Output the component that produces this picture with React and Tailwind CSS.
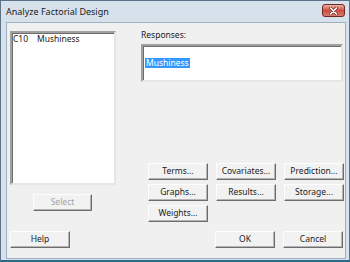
import React from "react";

const btn =
  "flex items-center justify-center bg-[#f2f2f2] border border-t-[#fdfdfd] border-l-[#fdfdfd] border-r-[#6d6d6d] border-b-[#6d6d6d] shadow-[inset_-1px_-1px_0_#b4b4b4] text-[8.5px] leading-none text-[#1a1a1a]";

function Btn({ children, className = "", disabled = false }) {
  return (
    <div className={`${btn} ${className} ${disabled ? "!text-[#a3a3a3]" : ""}`}>
      {children}
    </div>
  );
}

export default function App() {
  return (
    <div
      className="relative w-[350px] h-[262px] overflow-hidden bg-[#d6e1ec] border border-[#5d7286] border-b-[2px] border-b-[#2a6a88] flex flex-col"
      style={{ fontFamily: '"Noto Sans", "Liberation Sans", sans-serif' }}
    >
      <div className="h-[21px] shrink-0 flex items-center pl-[5px] text-[9px] text-[#1b1b1b]">
        Analyze Factorial Design
      </div>
      <div className="absolute right-[4px] top-[3px] w-[23px] h-[13px] rounded-[3px] border border-[#6e2b26] bg-gradient-to-b from-[#eab0a6] via-[#cf4c3f] to-[#d77a6b] flex items-center justify-center">
        <svg width="9" height="8" viewBox="0 0 9 8">
          <path d="M1.5 1 L7.5 7 M7.5 1 L1.5 7" stroke="#7a2f28" strokeWidth="3" strokeLinecap="round" />
          <path d="M1.5 1 L7.5 7 M7.5 1 L1.5 7" stroke="#ffffff" strokeWidth="1.6" strokeLinecap="round" />
        </svg>
      </div>
      <div className="flex-1 ml-[5px] mr-[3px] mb-[1px] bg-[#f0f0f0] border border-[#9fb0c1] flex flex-col pl-[3px] pt-[6px]">
        <div className="flex">
          <div className="w-[106px] flex flex-col">
            <div className="mt-[2px] h-[154px] bg-white border-2 border-t-[#a0a0a0] border-l-[#a0a0a0] border-r-[#e6e6e6] border-b-[#e6e6e6] shadow-[inset_1px_1px_0_#6d6d6d] pl-[1px] pt-[1px]">
              <div className="flex text-[8.5px] leading-[10px] text-[#1a1a1a]">
                <span className="w-[24px]">C10</span>
                <span>Mushiness</span>
              </div>
            </div>
            <Btn disabled className="ml-[23px] mt-[9px] w-[59px] h-[17px]">
              Select
            </Btn>
          </div>
          <div className="ml-[25px] w-[202px] flex flex-col">
            <div className="h-[12px] leading-[12px] text-[8.5px] text-[#1a1a1a]">Responses:</div>
            <div className="mt-[3px] h-[38px] bg-white border-2 border-t-[#a0a0a0] border-l-[#a0a0a0] border-r-[#e6e6e6] border-b-[#e6e6e6] shadow-[inset_1px_1px_0_#6d6d6d] pl-[2px] pt-[2px]">
              <span className="inline-block bg-[#3399ff] text-white text-[8.5px] leading-[10px] px-[1px]">
                Mushiness
              </span>
            </div>
            <div className="mt-[81px] ml-[7px] grid grid-cols-[60px_60px_60px] gap-x-[8px] gap-y-[4px]">
              <Btn className="h-[17px]">Terms...</Btn>
              <Btn className="h-[17px]">Covariates...</Btn>
              <Btn className="h-[17px]">Prediction...</Btn>
              <Btn className="h-[17px]">Graphs...</Btn>
              <Btn className="h-[17px]">Results...</Btn>
              <Btn className="h-[17px]">Storage...</Btn>
              <Btn className="h-[17px]">Weights...</Btn>
            </div>
          </div>
        </div>
        <div className="flex mt-[9px]">
          <Btn className="w-[60px] h-[17px]">Help</Btn>
          <Btn className="ml-[145px] w-[60px] h-[17px]">OK</Btn>
          <Btn className="ml-[8px] w-[60px] h-[17px]">Cancel</Btn>
        </div>
      </div>
    </div>
  );
}
